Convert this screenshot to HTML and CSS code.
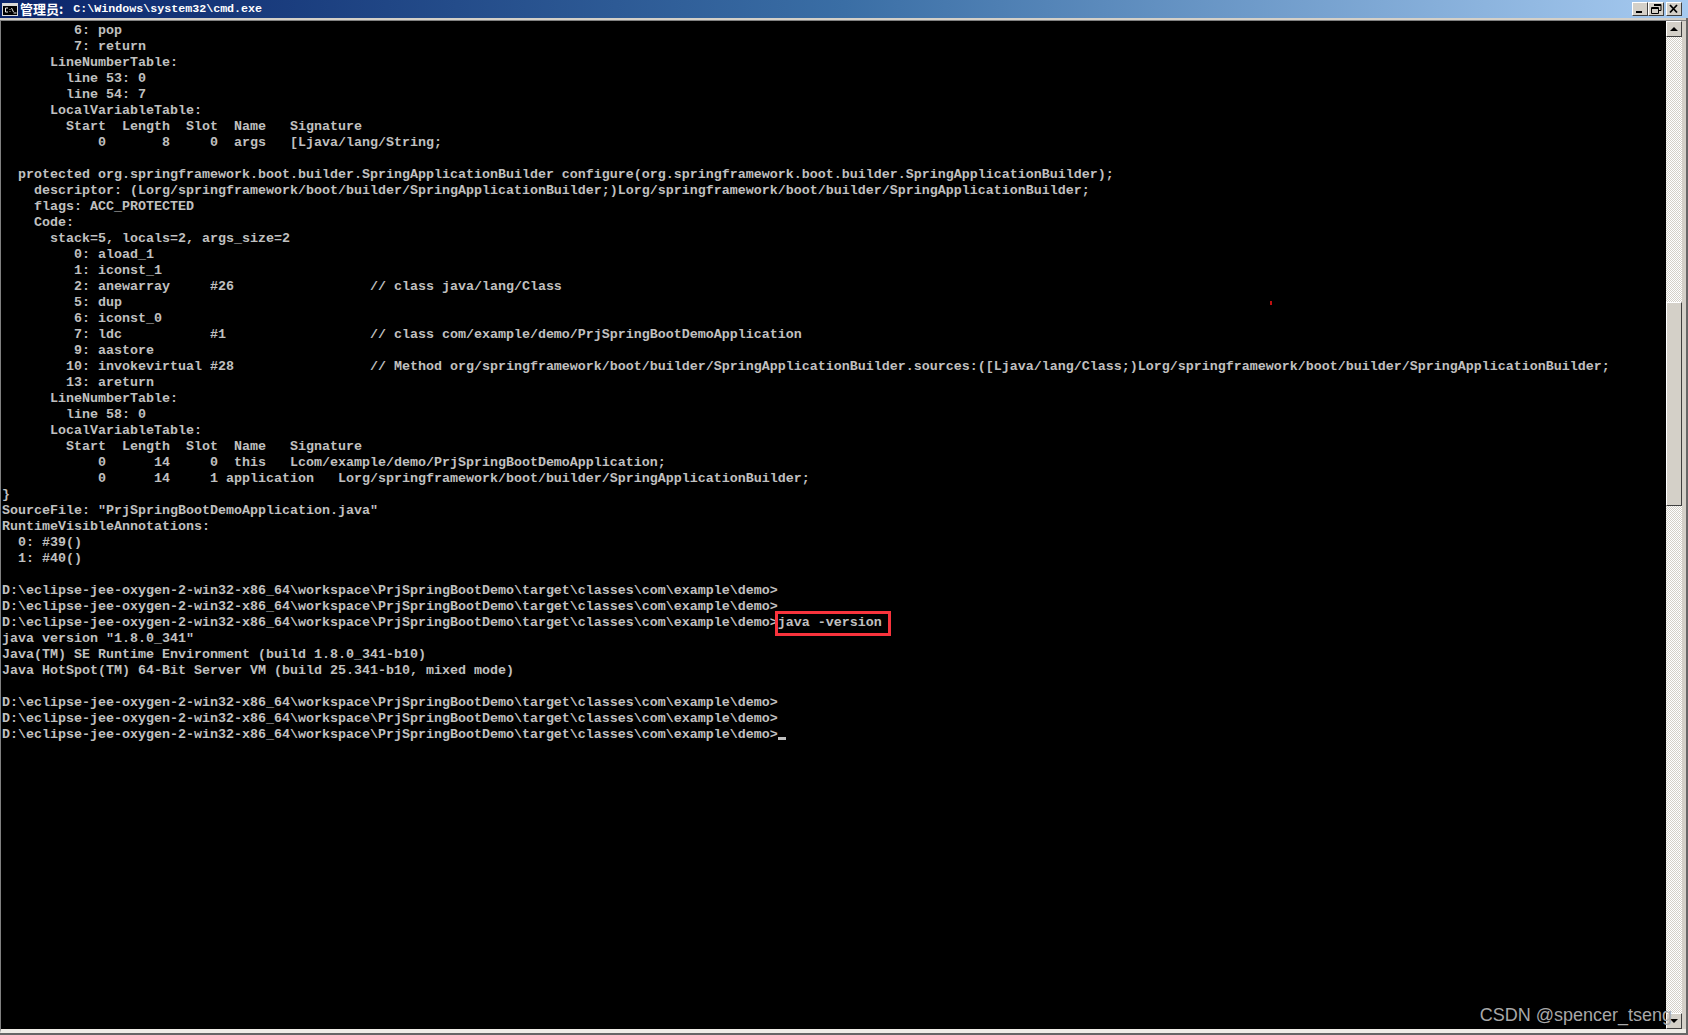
FILE: index.html
```html
<!DOCTYPE html>
<html lang="zh-CN">
<head>
<meta charset="utf-8">
<title>cmd.exe</title>
<link rel="stylesheet" href="styles.css">
</head>
<body>
<div class="window">
  <header class="titlebar">
    <svg class="app-icon" viewBox="0 0 16 13"><rect x="0.5" y="0.5" width="15" height="12" fill="#000" stroke="#d8d8d8"/><rect x="1" y="1" width="14" height="2" fill="#d8d8d8"/><path d="M6 5H3.5v4H6M8 6v.8M8 8.2V9M9.5 5l2 4M11.5 10h3" fill="none" stroke="#fff" stroke-width="0.9"/></svg>
    <span class="title-cjk">管理员:</span>
    <span class="title-path">C:\Windows\system32\cmd.exe</span>
    <div class="caption-buttons">
      <button class="cap-btn cap-min"><svg viewBox="0 0 14 12"><rect x="3" y="8" width="6" height="2" fill="#000"/></svg></button>
      <button class="cap-btn cap-max"><svg viewBox="0 0 14 12"><path d="M5 1.5h7v6h-2M2.5 4.5h7v6h-7z M5 2.5h7 M2.5 5.5h7" fill="none" stroke="#000"/></svg></button>
      <button class="cap-btn cap-close"><svg viewBox="0 0 14 12"><path d="M3 2l7 7.5M10 2l-7 7.5" fill="none" stroke="#000" stroke-width="1.8"/></svg></button>
    </div>
  </header>
  <div class="client">
    <main class="console">
<pre class="output">         6: pop
         7: return
      LineNumberTable:
        line 53: 0
        line 54: 7
      LocalVariableTable:
        Start  Length  Slot  Name   Signature
            0       8     0  args   [Ljava/lang/String;

  protected org.springframework.boot.builder.SpringApplicationBuilder configure(org.springframework.boot.builder.SpringApplicationBuilder);
    descriptor: (Lorg/springframework/boot/builder/SpringApplicationBuilder;)Lorg/springframework/boot/builder/SpringApplicationBuilder;
    flags: ACC_PROTECTED
    Code:
      stack=5, locals=2, args_size=2
         0: aload_1
         1: iconst_1
         2: anewarray     #26                 // class java/lang/Class
         5: dup
         6: iconst_0
         7: ldc           #1                  // class com/example/demo/PrjSpringBootDemoApplication
         9: aastore
        10: invokevirtual #28                 // Method org/springframework/boot/builder/SpringApplicationBuilder.sources:([Ljava/lang/Class;)Lorg/springframework/boot/builder/SpringApplicationBuilder;
        13: areturn
      LineNumberTable:
        line 58: 0
      LocalVariableTable:
        Start  Length  Slot  Name   Signature
            0      14     0  this   Lcom/example/demo/PrjSpringBootDemoApplication;
            0      14     1 application   Lorg/springframework/boot/builder/SpringApplicationBuilder;
}
SourceFile: "PrjSpringBootDemoApplication.java"
RuntimeVisibleAnnotations:
  0: #39()
  1: #40()

D:\eclipse-jee-oxygen-2-win32-x86_64\workspace\PrjSpringBootDemo\target\classes\com\example\demo&gt;
D:\eclipse-jee-oxygen-2-win32-x86_64\workspace\PrjSpringBootDemo\target\classes\com\example\demo&gt;
D:\eclipse-jee-oxygen-2-win32-x86_64\workspace\PrjSpringBootDemo\target\classes\com\example\demo&gt;<span class="marked">java -version</span>
java version "1.8.0_341"
Java(TM) SE Runtime Environment (build 1.8.0_341-b10)
Java HotSpot(TM) 64-Bit Server VM (build 25.341-b10, mixed mode)

D:\eclipse-jee-oxygen-2-win32-x86_64\workspace\PrjSpringBootDemo\target\classes\com\example\demo&gt;
D:\eclipse-jee-oxygen-2-win32-x86_64\workspace\PrjSpringBootDemo\target\classes\com\example\demo&gt;
D:\eclipse-jee-oxygen-2-win32-x86_64\workspace\PrjSpringBootDemo\target\classes\com\example\demo&gt;<span class="cursor"></span></pre>
      <span class="speck"></span>
    </main>
    <aside class="scrollbar">
      <button class="sb-btn"><svg viewBox="0 0 14 14"><path d="M3 9h8L7 5z" fill="#000"/></svg></button>
      <div class="sb-track"><div class="sb-spacer-top"></div><div class="sb-thumb"></div></div>
      <button class="sb-btn"><svg viewBox="0 0 14 14"><path d="M3 5h8L7 9z" fill="#000"/></svg></button>
    </aside>
  </div>
  <div class="watermark">CSDN @spencer_tseng</div>
</div>
</body>
</html>
```
FILE: styles.css
```css
*, *::after { box-sizing: border-box; }
html, body { margin: 0; height: 100%; background: #d4d0c8; overflow: hidden; }
.window { position: relative; height: 1035px; display: flex; flex-direction: column; border-bottom: 2px solid #666; border-right: 2px solid #666; }
.titlebar { height: 18px; flex: none; display: flex; align-items: center; padding-left: 2px; color: #fff; background: linear-gradient(90deg, #0a246a 0%, #3a6ea5 50%, #a6caf0 100%); margin-right: -2px; }
.app-icon { width: 16px; height: 13px; flex: none; }
.title-cjk { font: bold 13px "Noto Sans CJK SC", sans-serif; margin-left: 2px; line-height: 18px; }
.title-path { font: bold 11.67px "Liberation Mono", monospace; margin-left: 10px; line-height: 18px; }
.caption-buttons { margin-left: auto; display: flex; padding-right: 6px; }
.cap-btn { width: 16px; height: 14px; padding: 0; background: #d4d0c8; border: 1px solid; border-color: #fff #404040 #404040 #fff; display: flex; }
.cap-close { margin-left: 2px; }
.cap-btn svg { width: 100%; height: 100%; }
.client { flex: 1; min-height: 0; display: flex; border-left: 1px solid #808080; border-top: 1px solid #808080; border-bottom: 4px solid #eeece6; margin-top: 2px; padding-right: 4px; }
.console { flex: 1; min-width: 0; background: #000; padding: 2px 0 0 1px; position: relative; overflow: hidden; }
.output { margin: 0; font: bold 13.33px/16px "Liberation Mono", monospace; color: #c0c0c0; white-space: pre; }
.marked { position: relative; }
.marked::after { content: ""; position: absolute; left: -3px; top: -4px; width: 116px; height: 25px; border: 3px solid #f8333c; }
.cursor { display: inline-block; width: 8px; height: 3px; background: #c0c0c0; vertical-align: -2px; }
.speck { position: absolute; left: 1269px; top: 280px; width: 2px; height: 4px; background: #c01010; }
.scrollbar { width: 16px; flex: none; display: flex; flex-direction: column; }
.sb-btn { height: 16px; padding: 0; flex: none; background: #d4d0c8; border: 1px solid; border-color: #fff #404040 #404040 #fff; display: flex; }
.sb-btn svg { width: 100%; height: 100%; }
.sb-track { flex: 1; min-height: 0; background: repeating-conic-gradient(#d4d0c8 0 25%, #fff 0 50%) 0 0 / 2px 2px; display: flex; flex-direction: column; }
.sb-spacer-top { height: 265px; flex: none; }
.sb-thumb { height: 204px; flex: none; background: #d4d0c8; border: 1px solid; border-color: #fff #404040 #404040 #fff; }
.watermark { position: absolute; right: 14px; bottom: 7px; font: 18px "Liberation Sans", sans-serif; color: #a8a8a8; }
```
